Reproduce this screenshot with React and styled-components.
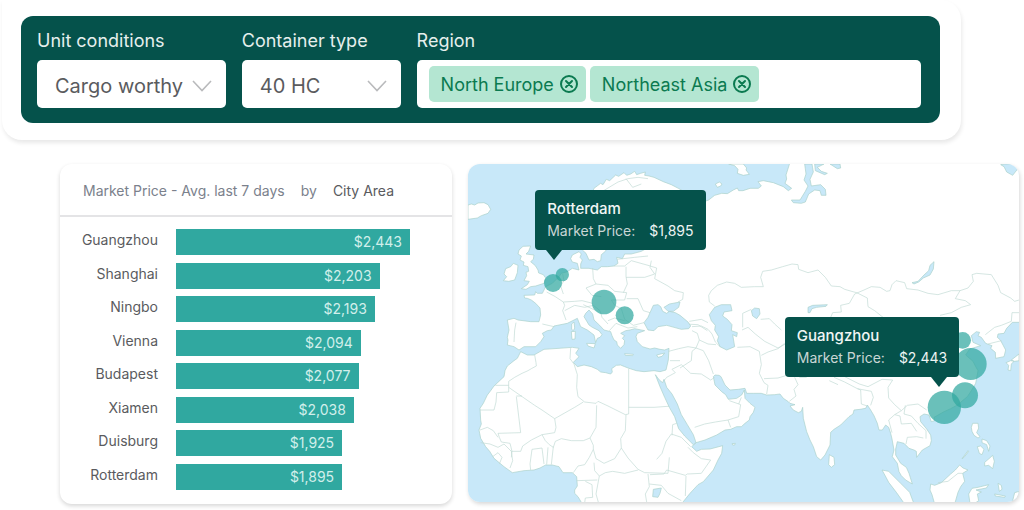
import React, { useState } from "react";
import styled, { createGlobalStyle } from "styled-components";

const GlobalStyle = createGlobalStyle`
  * {
    box-sizing: border-box;
  }
  body {
    margin: 0;
    background: #fff;
    font-family: Inter, "Open Sans", sans-serif;
    color: #5a5b5e;
  }
`;

const FilterCard = styled.header`
  margin: 0 63px 0 2px;
  padding: 16px 21px 17px 19px;
  border-radius: 0 20px 20px 20px;
  box-shadow: 1px 3px 4px rgba(0, 0, 0, 0.09);
`;

const FilterBar = styled.form`
  display: grid;
  grid-template-columns: 189fr 159fr 505fr;
  gap: 16px;
  padding: 15px 19px 15px 16px;
  border-radius: 12px;
  background: #05524b;
`;

const Field = styled.div`
  min-width: 0;
`;

const Label = styled.label`
  display: block;
  margin-bottom: 9px;
  color: #e6efed;
  font-size: 18px;
  line-height: 20px;
`;

const SelectBox = styled.div`
  position: relative;
`;

const Select = styled.select`
  appearance: none;
  width: 100%;
  height: 48px;
  padding: 4px 36px 0 18px;
  border: none;
  border-radius: 5px;
  background: #fff;
  color: #5a5b5e;
  font-family: inherit;
  font-size: 20px;
`;

const Chevron = styled.svg`
  position: absolute;
  right: 14px;
  top: 20px;
  pointer-events: none;
`;

const TagBox = styled.div`
  display: flex;
  align-items: center;
  gap: 4px;
  height: 48px;
  padding: 0 12px;
  border-radius: 5px;
  background: #fff;
`;

const Tag = styled.span`
  display: flex;
  align-items: center;
  gap: 6px;
  height: 36px;
  padding: 0 8px 0 12px;
  border-radius: 5px;
  background: #b4e6d2;
  color: #0b7a50;
  font-size: 18px;
  white-space: nowrap;
`;

const RemoveButton = styled.button`
  display: flex;
  padding: 0;
  border: none;
  background: none;
  color: inherit;
  cursor: pointer;
`;

const TagInput = styled.input`
  flex: 1;
  min-width: 0;
  border: none;
  outline: none;
  font: inherit;
`;

const Content = styled.main`
  display: grid;
  grid-template-columns: 392fr 551fr;
  gap: 16px;
  padding: 24px 5px 6px 60px;
`;

const ChartCard = styled.section`
  display: flex;
  flex-direction: column;
  border-radius: 12px;
  box-shadow: 0 2px 4px rgba(0, 0, 0, 0.16);
`;

const ChartHeader = styled.div`
  display: flex;
  align-items: center;
  gap: 16px;
  height: 53px;
  padding: 2px 23px 0;
  border-bottom: 2px solid #e4e4e6;
  color: #7b818c;
  font-size: 14px;
  white-space: nowrap;
`;

const ChartTitle = styled.h2`
  margin: 0;
  font-size: 14px;
  font-weight: 400;
`;

const GroupBy = styled.span`
  color: #5a5b5e;
`;

const BarList = styled.ul`
  flex: 1;
  display: flex;
  flex-direction: column;
  justify-content: space-between;
  margin: 0;
  padding: 12px 42px 14px 0;
  list-style: none;
`;

const BarRow = styled.li`
  display: flex;
  gap: 18px;
  height: 26px;
  font-size: 14px;
`;

const City = styled.span`
  width: 98px;
  line-height: 22px;
  text-align: right;
`;

const Track = styled.div`
  flex: 1;
`;

const Bar = styled.div`
  height: 26px;
  padding-right: 8px;
  background: #30a8a0;
  color: #d2efeb;
  line-height: 25px;
  text-align: right;
`;

const MapCard = styled.section`
  position: relative;
  align-self: start;
  aspect-ratio: 551 / 338;
  margin-bottom: 2px;
  border-radius: 12px;
  box-shadow: 1px 2px 4px rgba(0, 0, 0, 0.16);
`;

const MapSvg = styled.svg`
  display: block;
  width: 100%;
  height: 100%;
  border-radius: 12px;
  background: #c8e8f9;
`;

const Tooltip = styled.div`
  position: absolute;
  left: ${(props) => props.$left};
  top: ${(props) => props.$top};
  padding: 8px 12px;
  border-radius: 4px;
  background: #05524b;
  color: #c9d6d5;
  font-size: 14px;
  line-height: 22px;
  white-space: nowrap;

  &::after {
    content: "";
    position: absolute;
    top: 100%;
    left: ${(props) => props.$arrow};
    border: 8px solid transparent;
    border-top: 10px solid #05524b;
    border-bottom: none;
  }
`;

const TooltipCity = styled.div`
  color: #f1f6f5;
  font-size: 15px;
  font-weight: 500;
`;

const TooltipPrice = styled.span`
  margin-left: 14px;
  color: #eef4f3;
`;

const prices = [
  { city: "Guangzhou", price: "$2,443", share: 100 },
  { city: "Shanghai", price: "$2,203", share: 87 },
  { city: "Ningbo", price: "$2,193", share: 85 },
  { city: "Vienna", price: "$2,094", share: 79 },
  { city: "Budapest", price: "$2,077", share: 78 },
  { city: "Xiamen", price: "$2,038", share: 76 },
  { city: "Duisburg", price: "$1,925", share: 71 },
  { city: "Rotterdam", price: "$1,895", share: 71 },
];

const markers = [
  [255, 357, 27],
  [283, 332, 20],
  [408, 414, 37],
  [470, 454, 27],
  [1484, 529, 25],
  [1508, 600, 48],
  [1491, 694, 39],
  [1429, 730, 50],
];

const mainland =
  "M378 73L398 58 405 62 415 46 425 50 443 33 452 37 468 26 476 34 488 30 500 22 506 32 518 28 532 24 530 34 543 36 558 40 586 53 610 62 631 73 660 90 690 120 722 108 740 94 761 88 778 89 796 78 808 72 812 80 825 80 846 73 871 73 880 66 870 53 886 50 916 56 946 68 961 80 971 73 951 58 956 45 954 33 966-5 1660-5 1660 475 1633 475 1616 493 1608 508 1590 510 1588 520 1597 528 1613 558 1608 578 1583 583 1582 565 1568 553 1572 545 1553 538 1540 520 1530 515 1535 505 1525 503 1510 515 1515 535 1538 545 1505 555 1493 573 1515 592 1523 608 1530 620 1523 658 1510 680 1498 698 1468 723 1448 734 1428 743 1398 760 1400 770 1390 773 1383 753 1368 750 1356 758 1358 773 1376 795 1388 813 1390 830 1386 845 1363 858 1346 880 1345 862 1338 858 1323 853 1308 838 1288 833 1283 855 1283 873 1298 898 1315 910 1323 928 1333 960 1313 948 1300 935 1293 923 1288 898 1273 878 1278 858 1272 825 1268 808 1262 790 1253 783 1243 798 1233 798 1228 778 1218 755 1208 738 1198 723 1193 733 1176 736 1158 738 1155 750 1143 758 1118 783 1098 796 1088 805 1086 843 1071 873 1058 888 1046 878 1036 848 1026 828 1016 803 1006 763 1004 730 1000 742 991 746 976 738 966 726 981 722 966 718 961 713 946 703 936 690 920 692 896 693 880 688 856 688 836 688 831 673 811 676 786 678 771 663 759 638 753 634 741 633 736 638 741 663 761 683 773 692 781 706 806 703 821 693 829 678 831 703 846 718 861 730 856 745 846 758 844 768 831 778 820 788 806 788 788 796 771 798 746 813 711 828 684 836 671 848 686 862 700 856 726 855 764 845 761 868 750 888 736 918 706 953 690 962 666 988 640 1020 343 1020 330 998 320 988 320 978 328 966 326 938 313 926 285 926 273 908 253 903 233 903 216 912 198 918 168 920 133 926 108 908 78 883 65 862 53 848 38 823 33 798 40 780 38 768 36 733 46 718 58 693 68 680 78 666 108 638 111 620 118 606 138 590 148 583 158 563 178 573 198 573 228 556 273 553 313 550 333 553 323 568 333 578 316 595 328 608 348 603 370 608 388 616 398 624 413 626 428 630 433 624 431 614 445 604 458 603 470 608 483 613 505 620 528 623 558 620 576 623 594 618 601 588 603 553 590 558 576 556 560 552 546 555 523 548 508 533 504 518 508 508 530 500 500 494 486 498 473 500 458 508 470 515 463 523 470 530 468 542 458 553 448 543 446 533 438 528 432 515 428 503 408 498 395 484 378 468 374 450 363 438 353 448 348 458 363 483 373 490 393 500 402 512 396 520 388 523 383 536 378 513 358 498 338 488 328 463 318 468 298 478 273 483 258 486 250 498 238 500 223 508 228 518 218 533 203 548 168 548 153 558 138 548 118 543 120 528 118 520 123 498 118 468 138 463 150 468 188 473 213 473 218 453 216 432 203 418 190 408 178 403 170 402 168 394 200 393 203 383 208 388 223 388 233 368 253 358 273 338 280 328 298 323 313 313 333 318 328 298 313 294 308 284 313 273 333 263 340 270 336 280 343 288 338 300 338 313 363 313 388 318 400 308 418 308 438 306 450 298 446 280 463 284 470 270 490 270 520 262 560 240 470 190 430 200 425 240 412 262 400 272 398 290 388 293 378 286 363 288 354 268 343 258 330 200Z";

const islands = [
  "M0 123L10 120 20 123 30 117 48 116 60 122 68 136 60 148 40 155 28 162 0 166Z",
  "M153 258L165 247 188 246 182 262 174 270 198 273 196 286 188 293 202 305 210 318 212 327 226 332 233 342 228 358 203 366 188 368 174 376 160 374 178 362 184 352 168 350 176 335 174 325 182 322 180 308 166 304 168 294 156 288 160 276 150 270Z",
  "M113 314L128 308 136 298 150 304 148 326 140 348 122 352 106 350 116 338 108 330Z",
  "M311 480L318 474 320 492 316 500 311 496Z",
  "M310 503L322 502 321 525 312 526Z",
  "M356 538L382 539 378 552 360 546Z",
  "M470 569L496 571 494 575 472 574Z",
  "M566 573L590 567 582 577 570 580Z",
  "M1084 872L1098 880 1100 902 1090 910 1082 902Z",
  "M1242 918L1262 922 1298 958 1325 985 1338 1020 1310 1020 1285 985 1262 955 1252 936Z",
  "M1388 960L1400 964 1420 956 1448 930 1462 918 1475 903 1485 912 1500 918 1484 928 1490 952 1478 968 1470 985 1460 1020 1400 1020 1392 992 1386 978Z",
  "M1506 1018L1502 990 1512 973 1530 970 1562 962 1555 972 1524 978 1540 984 1528 990 1532 1010 1520 1018Z",
  "M1514 778L1530 778 1532 792 1526 806 1536 818 1530 822 1518 814 1512 802 1510 790Z",
  "M1542 825L1556 830 1566 846 1562 862 1556 842 1542 836Z",
  "M1528 848L1538 846 1548 856 1542 872 1534 868Z",
  "M1550 895L1562 885 1574 874 1579 892 1574 914 1562 904 1550 906Z",
  "M1482 884L1500 860 1502 862 1488 880Z",
  "M1590 958L1600 964 1602 976 1594 982Z",
  "M1580 990L1612 996 1610 1000 1582 996Z",
  "M1640 986L1653 982 1653 1014 1634 1010Z",
  "M1614 596L1628 590 1638 592 1630 600 1628 620 1620 618 1622 604Z",
  "M1630 588L1653 570 1653 590 1640 592Z",
  "M782 0L800 5 810 16 808 28 826 34 844 31 834 18 836 12 826 0Z",
  "M742 60L754 54 762 60 758 66 748 70Z",
  "M792 839L802 838 800 843 794 843Z",
];

const waters = [
  // Black Sea and Azov
  "M528 476L540 460 546 446 556 424 570 422 578 428 584 442 596 448 604 442 622 446 636 454 660 474 668 486 662 494 640 496 618 490 596 484 570 488 558 500 540 498Z",
  "M588 430L604 420 636 414 632 430 616 442 600 442Z",
  // Caspian
  "M724 452L740 430 760 422 788 422 792 440 768 444 764 456 778 466 792 482 790 500 808 506 806 518 794 512 800 548 776 558 756 548 748 530 752 518 740 498 742 484 730 470Z",
  "M850 440L860 432 874 434 876 450 866 464 854 456Z",
  "M1020 430L1034 424 1078 422 1074 427 1046 430 1032 434 1026 446 1020 446Z",
  "M1332 356L1350 352 1368 333 1382 320 1386 304 1398 293 1396 315 1386 333 1366 342 1352 354 1338 360Z",
  // Red Sea
  "M562 632L574 648 584 656 588 646 596 670 612 690 628 720 640 752 658 782 676 812 684 836 676 842 650 816 632 794 620 758 604 730 590 700 576 668Z",
  // Ob gulf
  "M1010 0L1032 0 1036 24 1026 46 1030 66 1044 64 1058 62 1072 76 1074 94 1060 94 1056 80 1040 78 1022 90 1012 114 1000 118 976 116 970 108 996 108 1012 82 1020 66 1008 48 1014 30Z",
  "M1040 0L1068 0 1048 10 1060 22 1078 28 1070 32 1042 20Z",
  "M1086 0L1116 0 1118 12 1108 14Z",
  "M1598 2L1610 0 1650 0 1648 16 1634 34 1616 24 1608 8Z",
  // Victoria
  "M556 976L580 972 576 988 570 1000 554 998Z",
];

const borders = [
  // North and west Africa
  "M200 573L204 596 205 606 190 614 180 620 162 628 140 640 122 652 122 684 86 686 84 714 78 738 36 738",
  "M82 664L122 664M122 670L200 724 222 738 260 764 320 730 346 714",
  "M145 696L162 696M145 698L158 806 90 808 94 820 100 834 126 838 132 862 130 880",
  "M308 552L306 584 318 600 328 632 326 670 330 698 350 714 384 718 390 712 420 726 472 752 482 750 482 614M482 730L558 730 612 726",
  "M260 764L264 790 260 806 222 812 190 828 164 846 158 862 130 862",
  "M222 812L232 830 244 842 256 850 262 832 280 824 310 830 346 830 366 822 384 790 386 724",
  "M366 822L376 844 376 856 364 880 350 902 330 906 316 926M376 856L384 884 408 898 440 884 460 852 458 824 472 800 474 752",
  "M460 852L480 882 510 916 530 926 600 928 604 880",
  "M378 896L380 920 394 936 412 926 434 922 470 928 510 918M394 936L384 990 392 1018M326 950L388 948M352 952L372 962 374 1000 352 1002 350 1016",
  "M192 856L186 900 188 918M192 856L222 852 228 900M240 850L236 902M256 848L250 902",
  "M130 862L134 890 126 912M36 798L58 790 76 800 90 820M38 836L66 840 90 850 108 840 130 862M74 878L90 866 102 880 94 900",
  "M540 930L544 968 532 990 536 1014M546 932L588 930 596 918 652 934 658 930 700 928 728 888 700 884 676 866 660 850M566 886L582 868 594 832 610 810 640 820 668 848M654 936L652 996M544 960L580 964 600 988 640 1010M612 814L614 782 626 778",
  // Middle East
  "M588 650L596 640 622 626 612 616 640 602 668 628 700 630 728 648 740 640M602 562L632 554 660 548 684 552 672 562 670 590 636 612M606 590L636 590M684 552L706 560 722 590 736 630",
  "M684 552L694 528 688 508 672 500M672 488L700 486 720 496 732 510 742 534 756 548M694 528L720 540 744 542",
  "M680 790L710 780 742 774 780 768 812 758 818 722 784 710M780 768L788 790M812 720L820 700",
  "M808 550L846 548 874 562 880 602 874 628 888 656 900 664 896 690M888 644L930 642 970 630M994 640L1016 640M1084 650L1110 662",
  "M880 574L900 564 930 554 950 538M822 498L840 490 862 510 890 532 930 552 960 536",
  "M980 640L990 662 978 676 984 696 964 712",
  // Central Asia, Russia, Mongolia, China
  "M740 426L724 414 722 394 730 380 748 364 776 354 800 358 820 370 860 368 886 368 878 340 884 322 910 318 944 308 972 300 990 302 992 316 1020 326 1050 318 1072 340 1090 366 1116 368 1130 376 1158 384 1166 386",
  "M824 490L824 448 850 436M878 466L904 464 920 480 940 498M1070 480L1088 460 1094 446 1120 444",
  "M1120 444L1118 424 1144 418 1160 390 1188 378 1210 368 1236 370 1256 382 1266 380 1272 362 1284 350 1310 356 1316 374 1350 378 1380 388 1410 392 1450 380 1476 380 1500 372 1516 352 1512 332 1526 328 1570 332 1590 364 1598 386 1628 402 1640 412 1653 408",
  "M1166 386L1198 402 1200 428 1220 440 1250 464M1476 380L1462 404 1492 410 1508 422 1480 430 1450 446 1416 454M1552 512L1580 490 1600 484 1630 472 1632 446 1653 446M1560 540L1600 530",
  "M1098 640L1130 654 1168 674 1178 678 1180 720 1198 726M1168 674L1210 682 1216 700 1208 724M1130 638L1174 660 1200 668 1242 646 1274 648 1260 670 1262 702 1280 722 1300 740 1280 752 1262 768 1272 806",
  "M1300 740L1318 724 1350 720 1376 738M1312 724L1308 750 1330 756 1350 778 1374 800 1374 824M1280 752L1296 756 1300 780 1330 778 1346 802M1314 840L1318 820 1346 818 1366 822M1410 956L1440 952 1470 928 1484 928",
  // Europe
  "M138 534L140 498 144 476M223 480L258 488M236 384L262 398 286 414 290 424 284 440 294 468M284 330L288 350 278 366 286 390M286 414L320 412 342 410 374 418",
  "M374 312L376 344 384 360 354 372 372 394 400 398M384 360L420 364 440 382 476 386 470 408 430 408M474 308L474 338 478 360 466 386",
  "M438 306L470 306 490 290 540 304M448 286L500 280M474 340L530 340 560 330 546 310 550 290M500 280L540 276M540 304L566 312 560 344 600 366 620 380 646 386 644 406 630 414",
  "M290 440L320 424 350 430 376 424 396 440 402 460 420 480M346 422L380 438M430 408L440 424 460 434 470 466 496 484 528 476M476 404L510 404 526 440 546 446M420 470L440 462 470 470M424 500L444 478 480 492 508 488",
  "M394 88L420 72 450 54 480 44 510 40 540 44M474 44L494 70 520 60M650 480L690 482 718 500M664 472L700 466 720 476",
];

const circledX = (
  <svg width="18" height="18" viewBox="0 0 18 18" fill="none" stroke="currentColor" strokeWidth="2">
    <circle cx="9" cy="9" r="8" />
    <path d="M6 6L12 12M12 6L6 12" strokeLinecap="round" />
  </svg>
);

const SelectField = ({ id, label, options }) => (
  <Field>
    <Label htmlFor={id}>{label}</Label>
    <SelectBox>
      <Select id={id}>
        {options.map((option) => (
          <option key={option}>{option}</option>
        ))}
      </Select>
      <Chevron width="20" height="12" viewBox="0 0 20 12" fill="none" stroke="#b9babc" strokeWidth="1.6">
        <path d="M1 1L10 10.5 19 1" />
      </Chevron>
    </SelectBox>
  </Field>
);

const WorldMap = () => (
  <MapSvg viewBox="0 0 1653 1014" preserveAspectRatio="xMidYMid slice" aria-hidden="true">
    <g fill="#fff" stroke="#a9d0c8" strokeWidth="2" strokeLinejoin="round">
      <path d={mainland} />
      {islands.map((d) => (
        <path key={d} d={d} />
      ))}
    </g>
    <g fill="none" stroke="#bfdad3" strokeWidth="2" strokeLinejoin="round">
      {borders.map((d) => (
        <path key={d} d={d} />
      ))}
    </g>
    <g fill="#c8e8f9" stroke="#a9d0c8" strokeWidth="2">
      {waters.map((d) => (
        <path key={d} d={d} />
      ))}
    </g>
    <g fill="#30a8a0" fillOpacity="0.72">
      {markers.map(([x, y, r]) => (
        <circle key={x} cx={x} cy={y} r={r} />
      ))}
    </g>
  </MapSvg>
);

const PriceTooltip = ({ city, price, left, top, arrow }) => (
  <Tooltip $left={left} $top={top} $arrow={arrow}>
    <TooltipCity>{city}</TooltipCity>
    Market Price:
    <TooltipPrice>{price}</TooltipPrice>
  </Tooltip>
);

function App() {
  const [regions, setRegions] = useState(["North Europe", "Northeast Asia"]);

  const removeRegion = (name) => {
    setRegions(regions.filter((region) => region !== name));
  };

  return (
    <>
      <GlobalStyle />
      <FilterCard>
        <FilterBar>
          <SelectField id="condition" label="Unit conditions" options={["Cargo worthy"]} />
          <SelectField id="container" label="Container type" options={["40 HC"]} />
          <Field>
            <Label htmlFor="region">Region</Label>
            <TagBox>
              {regions.map((region) => (
                <Tag key={region}>
                  {region}
                  <RemoveButton type="button" aria-label={`Remove ${region}`} onClick={() => removeRegion(region)}>
                    {circledX}
                  </RemoveButton>
                </Tag>
              ))}
              <TagInput id="region" />
            </TagBox>
          </Field>
        </FilterBar>
      </FilterCard>

      <Content>
        <ChartCard>
          <ChartHeader>
            <ChartTitle>Market Price - Avg. last 7 days</ChartTitle>
            <span>by</span>
            <GroupBy>City Area</GroupBy>
          </ChartHeader>
          <BarList>
            {prices.map(({ city, price, share }) => (
              <BarRow key={city}>
                <City>{city}</City>
                <Track>
                  <Bar style={{ width: `${share}%` }}>{price}</Bar>
                </Track>
              </BarRow>
            ))}
          </BarList>
        </ChartCard>

        <MapCard>
          <WorldMap />
          <PriceTooltip city="Rotterdam" price="$1,895" left="12.2%" top="7.7%" arrow="11px" />
          <PriceTooltip city="Guangzhou" price="$2,443" left="57.5%" top="45.3%" arrow="146px" />
        </MapCard>
      </Content>
    </>
  );
}

export default App;
